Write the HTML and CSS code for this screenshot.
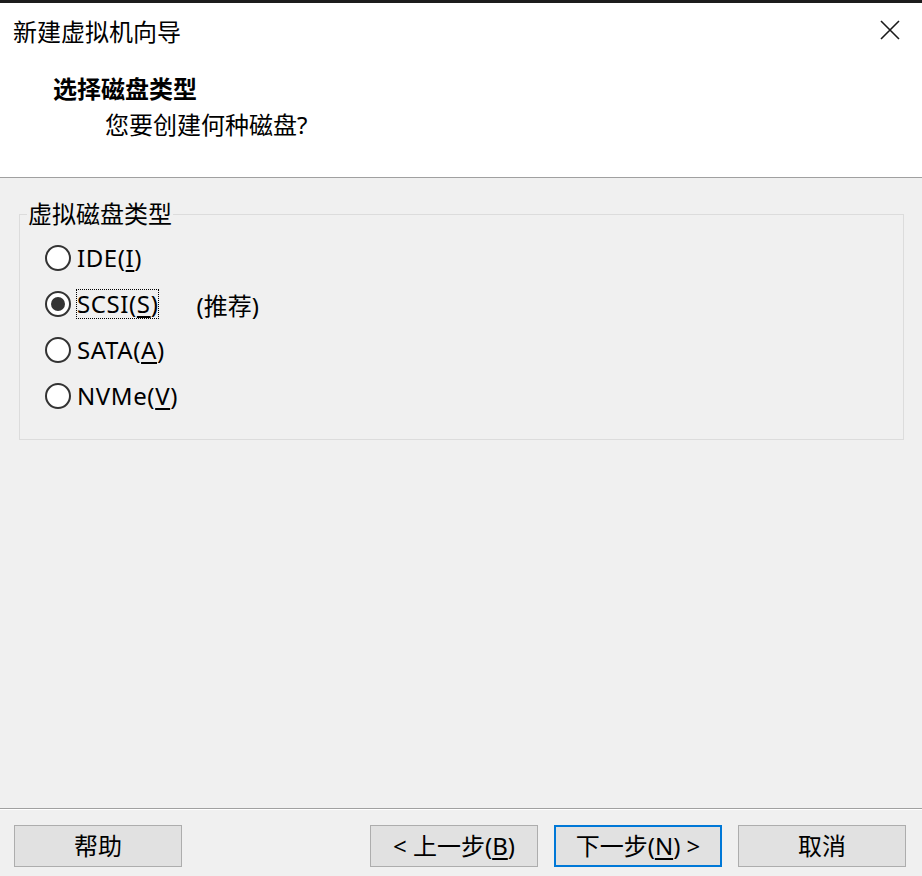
FILE: index.html
```html
<!DOCTYPE html>
<html lang="zh-CN">
<head>
    <meta charset="UTF-8">
    <title>新建虚拟机向导</title>
    <link rel="stylesheet" href="styles.css">
</head>
<body>
    <div class="window">
        <div class="titlebar">
            <span class="title">新建虚拟机向导</span>
            <svg class="close" width="20" height="20" viewBox="0 0 20 20">
                <path d="M1 1 L19 19 M19 1 L1 19" stroke="#1a1a1a" stroke-width="1.6" fill="none"/>
            </svg>
        </div>

        <div class="header">
            <div class="heading">选择磁盘类型</div>
            <div class="subheading">您要创建何种磁盘?</div>
        </div>

        <div class="main">
            <fieldset class="group">
                <legend>虚拟磁盘类型</legend>
                <div class="radio-row">
                    <span class="radio"></span>
                    <span class="label">IDE(<u>I</u>)</span>
                </div>
                <div class="radio-row">
                    <span class="radio checked"></span>
                    <span class="label focused">SCSI(<u>S</u>)</span>
                    <span class="hint">(推荐)</span>
                </div>
                <div class="radio-row">
                    <span class="radio"></span>
                    <span class="label">SATA(<u>A</u>)</span>
                </div>
                <div class="radio-row">
                    <span class="radio"></span>
                    <span class="label">NVMe(<u>V</u>)</span>
                </div>
            </fieldset>
        </div>

        <div class="footer">
            <button class="btn">帮助</button>
            <div class="nav-buttons">
                <button class="btn">&lt; 上一步(<u>B</u>)</button>
                <button class="btn default">下一步(<u>N</u>) &gt;</button>
                <button class="btn">取消</button>
            </div>
        </div>
    </div>
</body>
</html>
```

FILE: styles.css
```css
body {
    margin: 0;
    font-family: "Noto Sans", "Noto Sans CJK SC", sans-serif;
    font-size: 24px;
    color: #000;
    background-color: #f0f0f0;
}

.window {
    width: 922px;
    height: 876px;
    display: flex;
    flex-direction: column;
    border-top: 3px solid #1c1c1c;
    box-sizing: border-box;
}

.titlebar {
    height: 57px;
    background-color: #fff;
    display: flex;
    align-items: center;
    justify-content: space-between;
    padding: 0 22px 0 13px;
}

.title {
    line-height: 32px;
}

.close {
    display: block;
    margin-top: -3px;
}

.header {
    height: 106px;
    background-color: #fff;
    padding: 11px 0 0 53px;
    border-bottom: 1px solid #a0a0a0;
}

.heading {
    font-weight: bold;
    line-height: 36px;
}

.subheading {
    line-height: 36px;
    padding-left: 52px;
}

.main {
    flex: 1;
    padding: 20px 18px 0 19px;
}

.group {
    margin: 0;
    padding: 5px 0 20px 0;
    border: 1px solid #dcdcdc;
}

.group legend {
    margin-left: 7px;
    padding: 0 1px;
    line-height: 32px;
}

.radio-row {
    height: 46px;
    padding-left: 25px;
    display: flex;
    align-items: center;
}

.radio {
    width: 26px;
    height: 26px;
    box-sizing: border-box;
    border: 2px solid #333;
    border-radius: 50%;
    background-color: #fff;
    display: flex;
    justify-content: center;
    align-items: center;
}

.radio.checked::after {
    content: "";
    width: 14px;
    height: 14px;
    border-radius: 50%;
    background-color: #333;
}

.label {
    margin-left: 5px;
    line-height: 28px;
    letter-spacing: 0.6px;
    border: 1px dotted transparent;
}

.label.focused {
    border-color: #000;
}

.label u {
    text-underline-offset: 3px;
}

.hint {
    margin-left: 37px;
}

.footer {
    height: 51px;
    border-top: 1px solid #a0a0a0;
    box-shadow: inset 0 1px 0 #fff;
    padding: 16px 16px 0 14px;
    display: flex;
    justify-content: space-between;
    align-items: flex-start;
}

.nav-buttons {
    display: flex;
    gap: 16px;
}

.btn {
    width: 168px;
    height: 42px;
    box-sizing: border-box;
    background-color: #e1e1e1;
    border: 1px solid #adadad;
    font-family: inherit;
    font-size: 24px;
    color: #000;
    padding: 0;
    line-height: 1;
}

.btn u {
    text-underline-offset: 3px;
}

.btn.default {
    border: 2px solid #0078d7;
}
```
